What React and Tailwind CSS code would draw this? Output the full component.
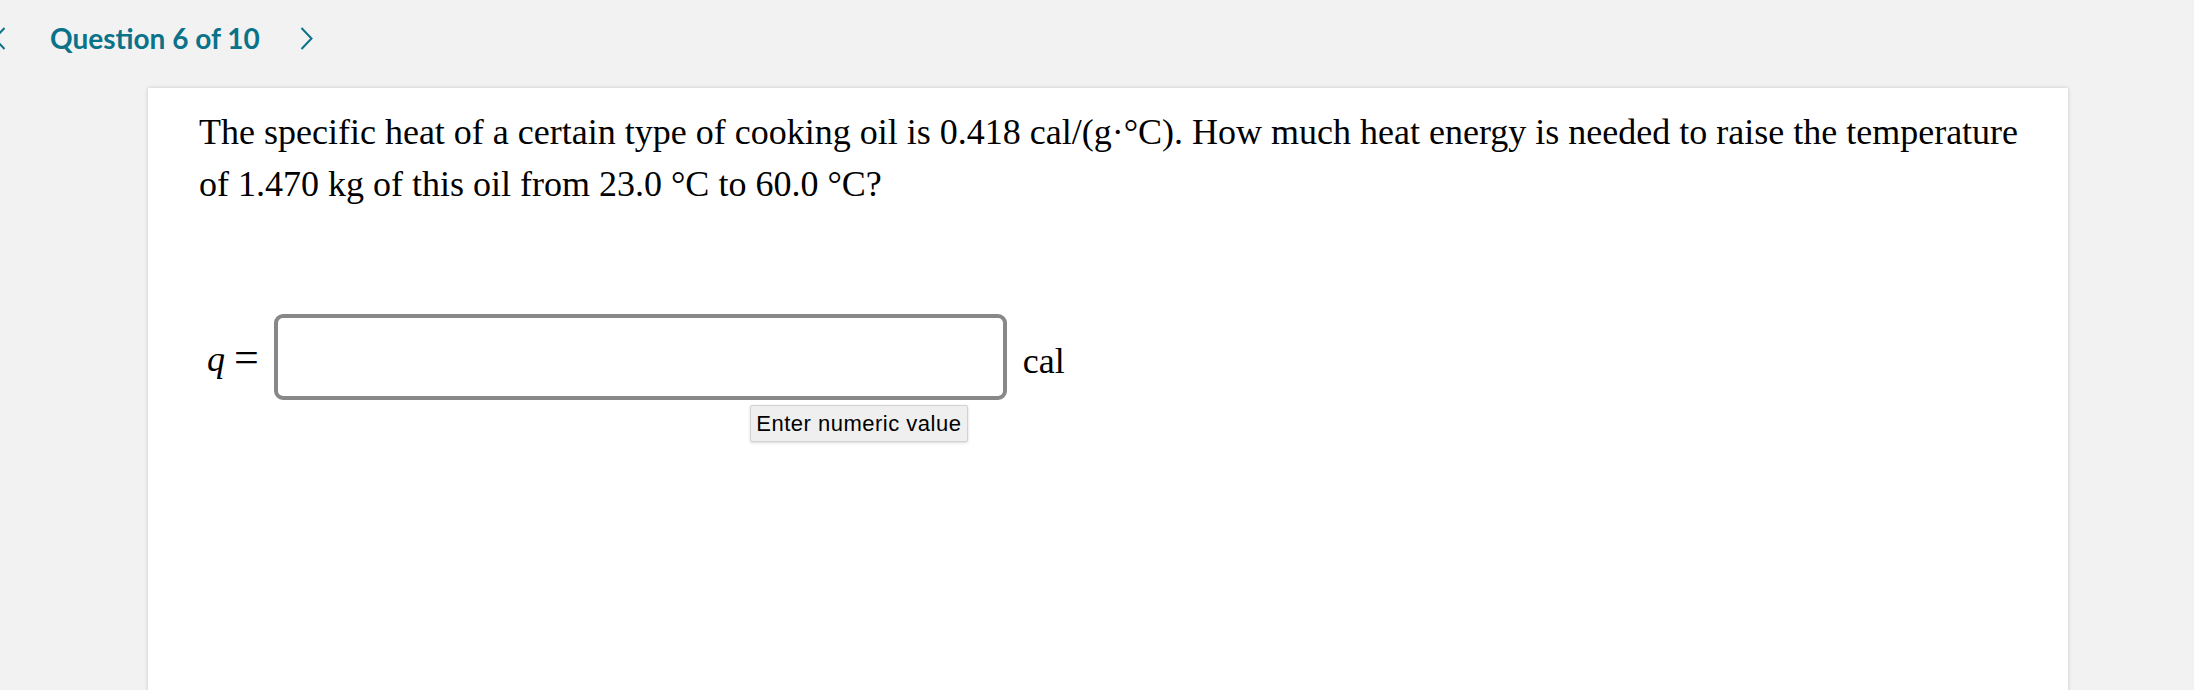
import React from "react";

const Chevron = ({ dir = "right", className = "" }) => (
  <svg
    viewBox="0 0 13 23"
    width="13"
    height="23"
    className={className}
    fill="none"
    stroke="#0a7289"
    strokeWidth="2"
  >
    {dir === "right" ? (
      <path d="M1.5 1 L11.5 11.5 L1.5 22" />
    ) : (
      <path d="M11.5 1 L1.5 11.5 L11.5 22" />
    )}
  </svg>
);

const App = () => {
  return (
    <div className="h-[690px] overflow-hidden bg-[#f2f2f2]">
      {/* Question nav */}
      <div className="flex items-center h-[76px]">
        <Chevron dir="left" className="ml-[-7px] mt-[1px]" />
        <span className="ml-[44px] font-['Lato',sans-serif] font-bold text-[28px] text-[#0a7289]">
          Question 6 of 10
        </span>
        <Chevron dir="right" className="ml-[40px] mt-[1px]" />
      </div>

      {/* Question card */}
      <div className="ml-[148px] mt-[12px] w-[1920px] h-[620px] bg-white shadow-[0_0_4px_rgba(0,0,0,0.18)]">
        <div className="pt-[18px] pl-[51px] pr-[48px] font-['Liberation_Serif','Times_New_Roman',serif] text-black">
          <p className="text-[36px] leading-[52px]">
            The specific heat of a certain type of cooking oil is 0.418 cal/(g·°C). How much heat energy is needed to raise the temperature of 1.470 kg of this oil from 23.0 °C to 60.0 °C?
          </p>

          {/* Answer row */}
          <div className="flex items-center mt-[104px]">
            <span className="pl-[8px] text-[36px] leading-[52px] italic mt-[4px]">q</span>
            <span className="ml-[9px] text-[44px] leading-[52px] mt-[2px]">=</span>
            <div className="relative ml-[15px]">
              <div className="w-[733px] h-[86px] rounded-[9px] border-[4px] border-[#888888] bg-white" />
              <div className="absolute left-[476px] top-[91px] w-[218px] h-[37px] flex items-center justify-center bg-[#efefef] border border-[#d2d2d2] shadow-[0_1px_3px_rgba(0,0,0,0.15)] rounded-[2px] font-['Liberation_Sans',Arial,sans-serif] text-[22px] tracking-[0.5px] text-black">
                Enter numeric value
              </div>
            </div>
            <span className="ml-[16px] text-[36px] leading-[52px] mt-[8px]">cal</span>
          </div>
        </div>
      </div>
    </div>
  );
};

export default App;
